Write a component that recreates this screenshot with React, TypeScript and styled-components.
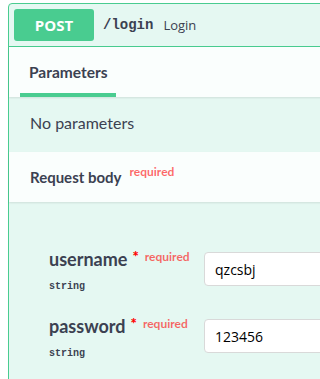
import styled, { createGlobalStyle } from "styled-components"

const GlobalStyle = createGlobalStyle`
	html, body {
		margin: 0;
		padding: 0;
		background: #ffffff;
		overflow: hidden;
	}
	body {
		font-family: Lato, "Open Sans", sans-serif;
		color: #3b4151;
	}
`

const fields = [
	{ name: "username", value: "qzcsbj" },
	{ name: "password", value: "123456" },
]

const App = () => {
	return (
		<>
			<GlobalStyle />
			<Page>
				<OpBlock>
					<Summary>
						<Method>POST</Method>
						<Path>/login</Path>
						<Description>Login</Description>
					</Summary>

					<SectionHeader>
						<TabItem>Parameters</TabItem>
					</SectionHeader>
					<SectionBody>No parameters</SectionBody>

					<SectionHeader>
						<HeaderTitle>
							Request body<Required>required</Required>
						</HeaderTitle>
					</SectionHeader>

					<FormBody>
						{fields.map((field) => (
							<FieldRow key={field.name}>
								<NameCell>
									<FieldName>
										{field.name}
										<Star>*</Star>
										<FieldRequired>required</FieldRequired>
									</FieldName>
									<FieldType>string</FieldType>
								</NameCell>
								<Input defaultValue={field.value} />
							</FieldRow>
						))}
					</FormBody>
				</OpBlock>
			</Page>
		</>
	)
}

const Page = styled.div`
	padding: 3px 0 0 8px;
`

const OpBlock = styled.div`
	width: 640px;
	border: 1px solid #49cc90;
	border-radius: 4px;
	background: #e5f8f2;
`

const Summary = styled.div`
	display: flex;
	align-items: center;
	padding: 5px;
	border-bottom: 1px solid #49cc90;
`

const Method = styled.div`
	width: 80px;
	height: 32px;
	display: flex;
	align-items: center;
	justify-content: center;
	border-radius: 3px;
	background: #49cc90;
	color: #ffffff;
	font-family: "Open Sans", sans-serif;
	font-size: 15px;
	font-weight: 700;
`

const Path = styled.span`
	margin-left: 9px;
	font-family: "Liberation Mono", monospace;
	font-size: 14px;
	font-weight: 700;
	color: #3b4151;
`

const Description = styled.span`
	margin-left: 10px;
	font-family: "Open Sans", sans-serif;
	font-size: 13px;
	color: #3b4151;
`

const SectionHeader = styled.div`
	height: 50px;
	display: flex;
	align-items: center;
	padding: 0 11px;
	background: rgba(255, 255, 255, 0.8);
	box-shadow: 0 1px 2px rgba(0, 0, 0, 0.1);
`

const TabItem = styled.div`
	position: relative;
	align-self: stretch;
	display: flex;
	align-items: center;
	padding: 0 8px 0 9px;
	font-size: 15.5px;
	font-weight: 700;

	&::after {
		content: "";
		position: absolute;
		left: 0;
		right: 0;
		bottom: 0;
		height: 4px;
		background: #49cc90;
	}
`

const HeaderTitle = styled.div`
	padding-left: 10px;
	font-size: 15px;
	font-weight: 700;
`

const Required = styled.span`
	position: relative;
	top: -7px;
	margin-left: 8px;
	font-size: 12px;
	font-weight: 700;
	color: rgba(255, 0, 0, 0.6);
`

const SectionBody = styled.div`
	height: 55px;
	box-sizing: border-box;
	display: flex;
	align-items: center;
	padding: 0 21px 4px;
	font-size: 16px;
`

const FormBody = styled.div`
	display: flex;
	flex-direction: column;
	gap: 33px;
	padding: 50px 0 30px 40px;
`

const FieldRow = styled.div`
	height: 34px;
	display: flex;
	align-items: flex-start;
`

const NameCell = styled.div`
	width: 155px;
	margin-top: -2px;
	display: flex;
	flex-direction: column;
	gap: 10px;
`

const FieldName = styled.div`
	font-size: 18px;
	font-weight: 700;
	line-height: 18px;
	white-space: nowrap;
`

const Star = styled.span`
	position: relative;
	top: -4px;
	margin-left: 5px;
	font-size: 15px;
	font-weight: 900;
	color: #ff0000;
`

const FieldRequired = styled.span`
	position: relative;
	top: -5px;
	margin-left: 6px;
	font-size: 12px;
	font-weight: 700;
	color: rgba(255, 0, 0, 0.6);
`

const FieldType = styled.div`
	font-family: "Liberation Mono", monospace;
	font-size: 10px;
	font-weight: 600;
	color: #3b4151;
`

const Input = styled.input`
	width: 340px;
	height: 34px;
	box-sizing: border-box;
	padding: 0 10px;
	border: 1px solid #d9d9d9;
	border-radius: 4px;
	background: #ffffff;
	font-family: "Open Sans", sans-serif;
	font-size: 14px;
	color: #000000;
	outline: none;
`

export default App
